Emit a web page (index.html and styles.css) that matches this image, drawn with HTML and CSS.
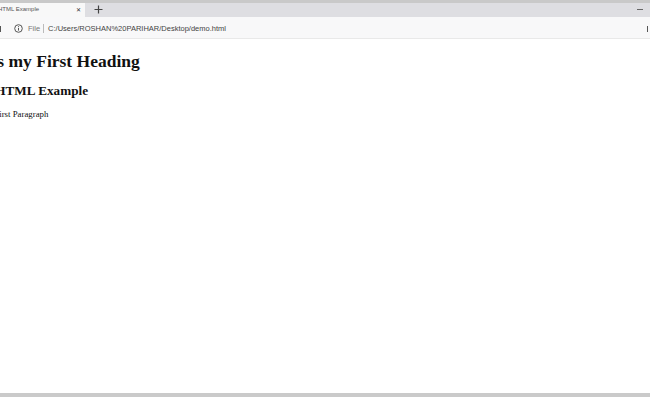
FILE: index.html
```html
<!DOCTYPE html>
<html lang="en">
<head>
    <meta charset="UTF-8">
    <title>HTML Example</title>
    <link rel="stylesheet" href="styles.css">
</head>
<body>
    <div class="top-edge"></div>
    <div class="tabstrip">
        <div class="tab">
            <span class="tab-title">HTML Example</span>
            <span class="tab-close">&#x2715;</span>
        </div>
        <svg class="new-tab" width="9" height="9" viewBox="0 0 9 9">
            <path d="M4.5 0.5v8M0.5 4.5h8" stroke="#444" stroke-width="1.2" fill="none"/>
        </svg>
        <span class="minimize"></span>
    </div>
    <div class="toolbar">
        <span class="reload-edge"></span>
        <div class="omnibox">
            <svg class="info-icon" width="9" height="9" viewBox="0 0 9 9">
                <circle cx="4.5" cy="4.5" r="3.8" stroke="#555" fill="none"/>
                <path d="M4.5 4v2.6M4.5 2.2v1" stroke="#555" fill="none"/>
            </svg>
            <span class="scheme">File</span>
            <span class="divider"></span>
            <span class="url">C:/Users/ROSHAN%20PARIHAR/Desktop/demo.html</span>
        </div>
        <span class="menu-edge"></span>
    </div>
    <main class="page">
        <h1>This is my First Heading</h1>
        <h2>This is HTML Example</h2>
        <p>This is my First Paragraph</p>
    </main>
    <div class="bottom-edge"></div>
</body>
</html>
```

FILE: styles.css
```css
* {
    margin: 0;
    padding: 0;
    box-sizing: border-box;
}

html, body {
    width: 650px;
    height: 400px;
    overflow: hidden;
}

body {
    display: flex;
    flex-direction: column;
    background: #fff;
    font-family: "Liberation Sans", Arial, sans-serif;
}

.top-edge {
    height: 3px;
    background: #c9c9c9;
}

.tabstrip {
    display: flex;
    align-items: center;
    height: 14px;
    padding-bottom: 2px;
    background: #dedee2;
}

.tab {
    display: flex;
    align-items: center;
    justify-content: space-between;
    flex-shrink: 0;
    width: 99px;
    height: 14px;
    margin-bottom: -2px;
    margin-left: -14px;
    padding: 0 4px 2px 12px;
    background: #f8f8f8;
    font-size: 6px;
    color: #555;
}

.tab-close {
    font-size: 6px;
    color: #333;
}

.new-tab {
    margin-left: 9px;
}

.minimize {
    width: 6px;
    height: 1px;
    margin: 0 7px 0 auto;
    background: #666;
}

.toolbar {
    display: flex;
    align-items: center;
    height: 22px;
    padding-top: 2px;
    background: #f8f8f9;
    border-bottom: 1px solid #e9e9e9;
}

.reload-edge {
    width: 1px;
    height: 6px;
    background: #555;
}

.omnibox {
    display: flex;
    align-items: center;
    margin-left: 13px;
    font-size: 7.5px;
    color: #444;
}

.scheme {
    margin-left: 5px;
    color: #777;
}

.divider {
    width: 1px;
    height: 9px;
    margin: 0 4px 0 3px;
    background: #bbb;
}

.url {
    color: #444;
}

.menu-edge {
    width: 1px;
    height: 6px;
    margin-left: auto;
    margin-right: 2px;
    background: #555;
}

.page {
    flex: 1;
    margin-left: -45px;
    font-family: "Liberation Serif", "Times New Roman", serif;
    color: #111;
}

h1 {
    margin-top: 11px;
    font-size: 17.5px;
    line-height: 22px;
}

h2 {
    margin-top: 10px;
    font-size: 13.2px;
    line-height: 17px;
}

p {
    margin-top: 10px;
    font-size: 8.8px;
    line-height: 11px;
}

.bottom-edge {
    flex-shrink: 0;
    height: 4px;
    margin-bottom: 3px;
    background: #cacaca;
}
```
